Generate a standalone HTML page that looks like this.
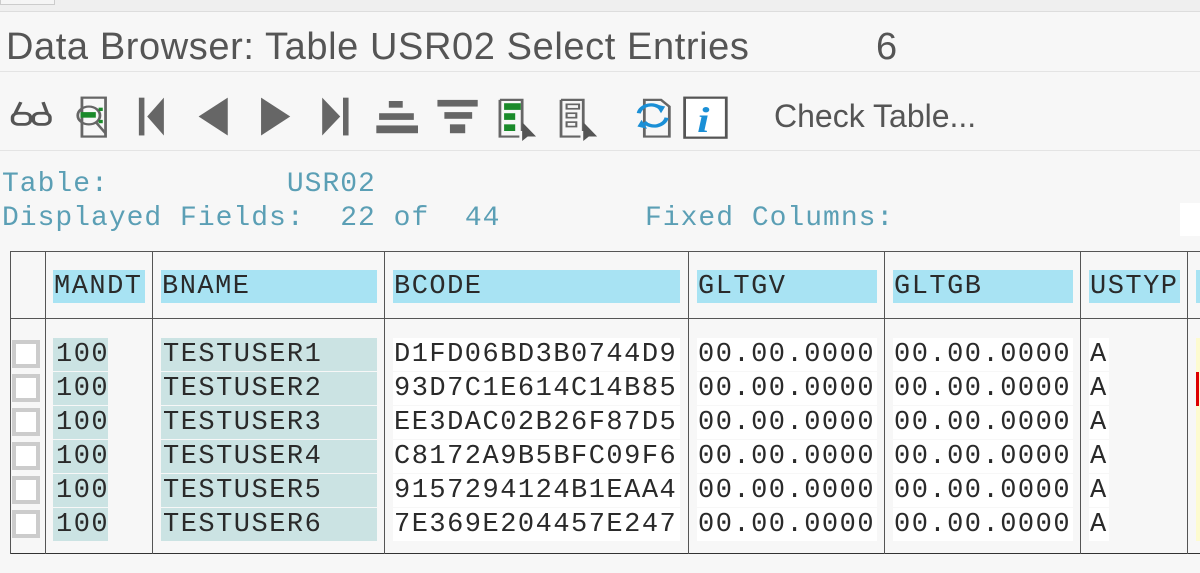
<!DOCTYPE html>
<html><head><meta charset="utf-8"><style>
*{margin:0;padding:0;box-sizing:border-box}
body{width:1200px;height:573px;background:#f7f7f7;position:relative;overflow:hidden;font-family:"Liberation Sans",sans-serif}
.a{position:absolute;white-space:pre}
.m{font-family:"Liberation Mono",monospace;font-size:27px;letter-spacing:1.5px;color:#2a2a2a;line-height:34px}
.lb{font-family:"Liberation Mono",monospace;font-size:28px;letter-spacing:1px;color:#5b9fb5;line-height:34px}
.h{background:#a8e3f3;height:33px;top:270px}
.g{background:#cbe3e3}
.w{background:#fff}
.vl{position:absolute;top:251px;height:303px;width:1px;background:#555}
.cb{position:absolute;left:12px;width:28px;height:28px;border:4px solid #ccc;background:#fff}
</style></head><body>
<div class="a" style="left:0;top:0;width:1200px;height:12px;background:#efefef;border-bottom:1px solid #ddd"></div>
<div class="a" style="left:0;top:0;width:55px;height:5px;background:#f5f5f5;border:1px solid #ccc;border-top:none"></div>
<div class="a" style="left:6px;top:26px;font-size:38px;letter-spacing:0.6px;color:#555">Data Browser: Table USR02 Select Entries</div>
<div class="a" style="left:876px;top:26px;font-size:38px;color:#555">6</div>
<div class="a" style="left:0;top:71px;width:1200px;height:1px;background:#e4e4e4"></div>
<div class="a" style="left:0;top:150px;width:1200px;height:1px;background:#e4e4e4"></div>
<svg class="a" style="left:0;top:91px" width="736" height="50" viewBox="0 0 530 45" preserveAspectRatio="none">
<g fill="none" stroke="#555" stroke-width="2.5"><rect x="9" y="20" width="13" height="10" rx="4"/><rect x="24" y="20" width="12" height="10" rx="4"/><path d="M22 24h2M11 20l4-10M34 20l-3-10"/></g>
<g stroke="#666" stroke-width="2" fill="none"><rect x="59" y="6" width="17" height="35"/><circle cx="64" cy="22" r="8"/><path d="M69 28l7 10"/></g>
<rect x="58" y="19" width="11" height="5" fill="#1a8a2a"/><rect x="71" y="15" width="3" height="3" fill="#1a8a2a"/><rect x="71" y="26" width="3" height="3" fill="#1a8a2a"/>
<g fill="#666"><rect x="100" y="6" width="4" height="34"/><path d="M118 6L106 23L118 40z"/>
<path d="M164 6L143 23L164 40z"/><path d="M188 6L209 23L188 40z"/>
<path d="M232 6L245 23L232 40z"/><rect x="247" y="6" width="4" height="34"/>
<rect x="280" y="9" width="10" height="6"/><rect x="273" y="20" width="25" height="6"/><rect x="271" y="31" width="30" height="7"/>
<rect x="315" y="8" width="29" height="6"/><rect x="320" y="19" width="20" height="6"/><rect x="324" y="30" width="11" height="8"/></g>
<g fill="none" stroke="#666" stroke-width="2"><path d="M360 8h16v28M360 8v33h14"/><path d="M404 8h16v28M404 8v33h14"/><path d="M464 8h12l6 6v27h-18z"/></g>
<rect x="363" y="11" width="12" height="6" fill="#1a8a2a"/><rect x="363" y="20" width="8" height="6" fill="#1a8a2a"/><rect x="363" y="30" width="8" height="6" fill="#1a8a2a"/>
<g fill="none" stroke="#666" stroke-width="1.5"><rect x="408" y="12" width="9" height="4"/><rect x="408" y="20" width="7" height="4"/><rect x="408" y="28" width="7" height="4"/></g>
<path d="M376 28l10 13h-6l-4 4z" fill="#555"/><path d="M420 28l10 13h-6l-4 4z" fill="#555"/>
<path d="M460 20a9 9 0 0 1 16-4M480 24a9 9 0 0 1-16 4" fill="none" stroke="#1a8fd6" stroke-width="3"/><path d="M472 12l7 2-3 6z M466 34l-7-2 3-6z" fill="#1a8fd6"/>
<rect x="493" y="6" width="30" height="36" fill="#fff" stroke="#555" stroke-width="2"/>
<text x="502" y="37" font-family="Liberation Serif" font-style="italic" font-weight="bold" font-size="32" fill="#1a8fd6">i</text>
</svg>
<div class="a" style="left:774px;top:98px;font-size:32px;color:#555">Check Table...</div>
<div class="a lb" style="left:2px;top:168px">Table:          USR02</div>
<div class="a lb" style="left:2px;top:202px">Displayed Fields:  22 of  44</div>
<div class="a lb" style="left:645px;top:202px">Fixed Columns:</div>
<div class="a" style="left:1180px;top:203px;width:20px;height:33px;background:#fff"></div>
<div class="a" style="left:10px;top:251px;width:1190px;height:1px;background:#555"></div>
<div class="a" style="left:10px;top:318px;width:1190px;height:1px;background:#555"></div>
<div class="a" style="left:10px;top:553px;width:1190px;height:1px;background:#333"></div>
<div class="vl" style="left:10px"></div><div class="vl" style="left:45px"></div><div class="vl" style="left:152px"></div><div class="vl" style="left:384px"></div><div class="vl" style="left:688px"></div><div class="vl" style="left:884px"></div><div class="vl" style="left:1080px"></div><div class="vl" style="left:1187px"></div>
<div class="a m h" style="left:53px;width:92px;padding-left:1px">MANDT</div>
<div class="a m h" style="left:161px;width:216px;padding-left:1px">BNAME</div>
<div class="a m h" style="left:393px;width:287px;padding-left:1px">BCODE</div>
<div class="a m h" style="left:697px;width:180px;padding-left:1px">GLTGV</div>
<div class="a m h" style="left:893px;width:180px;padding-left:1px">GLTGB</div>
<div class="a m h" style="left:1089px;width:91px;padding-left:1px">USTYP</div>
<div class="a h" style="left:1196px;width:4px"></div>
<div class="a" style="left:1196px;top:338px;width:4px;height:203px;background:#fdfbd0"></div>
<div class="a" style="left:1196px;top:372px;width:4px;height:34px;border-left:3px solid #d00"></div>
<div id="rows"></div>
<script>
var codes=["D1FD06BD3B0744D9","93D7C1E614C14B85","EE3DAC02B26F87D5","C8172A9B5BFC09F6","9157294124B1EAA4","7E369E204457E247"];
var h="";
for(var i=0;i<6;i++){var t=338+i*34;
h+='<div class="cb" style="top:'+(t+2)+'px"></div>';
h+='<div class="a m g" style="left:53px;top:'+t+'px;width:55px;height:33px;padding-left:3px">100</div>';
h+='<div class="a m g" style="left:161px;top:'+t+'px;width:216px;height:33px;padding-left:2px">TESTUSER'+(i+1)+'</div>';
h+='<div class="a m w" style="left:393px;top:'+t+'px;width:287px;height:33px;padding-left:1px">'+codes[i]+'</div>';
h+='<div class="a m w" style="left:697px;top:'+t+'px;width:180px;height:33px;padding-left:1px">00.00.0000</div>';
h+='<div class="a m w" style="left:893px;top:'+t+'px;width:180px;height:33px;padding-left:1px">00.00.0000</div>';
h+='<div class="a m w" style="left:1089px;top:'+t+'px;width:20px;height:33px;padding-left:1px">A</div>';}
document.getElementById("rows").innerHTML=h;
</script>
</body></html>
